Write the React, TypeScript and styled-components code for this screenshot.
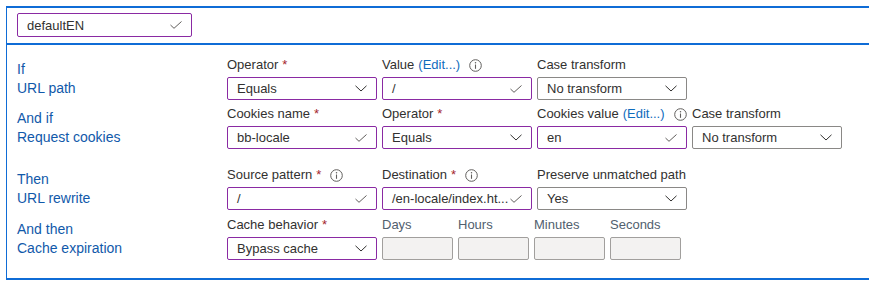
import React from "react";
import styled, { createGlobalStyle, css } from "styled-components";

const GlobalStyle = createGlobalStyle`
  html, body { margin: 0; padding: 0; background: #ffffff; }
  body {
    font-family: "Segoe UI", "Liberation Sans", Arial, sans-serif;
    font-size: 13px;
    color: #323130;
  }
`;

const Card = styled.div`
  margin: 6px 0 0 6px;
  border-left: 1px solid #0f6cd6;
  border-top: 2px solid #0f6cd6;
  border-bottom: 2px solid #0f6cd6;
  box-sizing: border-box;
`;

const Header = styled.div`
  padding: 5px 10px 6px;
  border-bottom: 2px solid #0f6cd6;
`;

const Body = styled.div`
  padding: 10px 10px 18px;
  display: flex;
  flex-direction: column;
`;

const RuleRow = styled.div<{ $gap: number }>`
  display: grid;
  grid-template-columns: 205px repeat(4, 150px);
  column-gap: 5px;
  align-items: center;
  margin-top: ${(p) => p.$gap}px;
`;

const SectionLabel = styled.div`
  color: #1159aa;
  font-size: 14px;
  line-height: 19px;
  display: flex;
  flex-direction: column;
  padding-top: 2px;
`;

const Field = styled.div<{ $span?: number }>`
  display: flex;
  flex-direction: column;
  ${(p) => p.$span && css`grid-column: span ${p.$span};`}
`;

const FieldLabel = styled.div<{ $muted?: boolean }>`
  height: 20px;
  line-height: 20px;
  display: flex;
  align-items: center;
  white-space: nowrap;
  margin-bottom: 2px;
  color: ${(p) => (p.$muted ? "#51606e" : "#323130")};
`;

const Required = styled.span`
  color: #a4262c;
  margin-left: 4px;
`;

const EditLink = styled.span`
  color: #0f6cbd;
  margin-left: 4px;
`;

const InfoWrap = styled.span`
  display: inline-flex;
  margin-left: 9px;
`;

type BoxVariant = "purple" | "gray" | "disabled";

const Box = styled.div<{ $variant: BoxVariant; $width?: number; $tall?: boolean }>`
  box-sizing: border-box;
  height: ${(p) => (p.$tall ? 24 : 23)}px;
  width: ${(p) => (p.$width ? `${p.$width}px` : "100%")};
  border: 1px solid
    ${(p) =>
      p.$variant === "purple" ? "#8a2aa3" : p.$variant === "gray" ? "#8a8886" : "#a19f9d"};
  border-radius: 2px;
  background: ${(p) => (p.$variant === "disabled" ? "#f3f2f1" : "#ffffff")};
  display: flex;
  align-items: center;
  padding: 0 9px 0 9px;
  gap: 4px;
`;

const BoxText = styled.span`
  flex: 1;
  min-width: 0;
  white-space: nowrap;
  color: #323130;
`;

const IconSlot = styled.span`
  display: inline-flex;
  flex-shrink: 0;
`;

const DurationGroup = styled.div`
  display: flex;
  gap: 5px;
`;

const DurationField = styled.div`
  display: flex;
  flex-direction: column;
  width: 71px;
`;

const Chevron = () => (
  <IconSlot>
    <svg width="12" height="7" viewBox="0 0 12 7">
      <polyline points="0.5,0.8 6,6 11.5,0.8" fill="none" stroke="#323130" strokeWidth="1" />
    </svg>
  </IconSlot>
);

const Check = () => (
  <IconSlot>
    <svg width="12" height="8" viewBox="0 0 12 8">
      <polyline points="0.5,4 4,7.3 11.5,0.5" fill="none" stroke="#605e5c" strokeWidth="1" />
    </svg>
  </IconSlot>
);

const Info = () => (
  <InfoWrap>
    <svg width="13" height="13" viewBox="0 0 13 13">
      <circle cx="6.5" cy="6.5" r="5.8" fill="none" stroke="#605e5c" strokeWidth="1" />
      <line x1="6.5" y1="5.5" x2="6.5" y2="9.8" stroke="#605e5c" strokeWidth="1.1" />
      <circle cx="6.5" cy="3.7" r="0.75" fill="#605e5c" />
    </svg>
  </InfoWrap>
);

type FieldDef = {
  label: string;
  required?: boolean;
  edit?: boolean;
  info?: boolean;
  value: string;
  variant: BoxVariant;
  icon: "chevron" | "check";
};

type RuleDef = {
  kind: string;
  name: string;
  gap: number;
  fields: FieldDef[];
  duration?: string[];
};

const rules: RuleDef[] = [
  {
    kind: "If",
    name: "URL path",
    gap: 0,
    fields: [
      { label: "Operator", required: true, value: "Equals", variant: "purple", icon: "chevron" },
      { label: "Value", edit: true, info: true, value: "/", variant: "purple", icon: "check" },
      { label: "Case transform", value: "No transform", variant: "gray", icon: "chevron" },
    ],
  },
  {
    kind: "And if",
    name: "Request cookies",
    gap: 4,
    fields: [
      { label: "Cookies name", required: true, value: "bb-locale", variant: "purple", icon: "check" },
      { label: "Operator", required: true, value: "Equals", variant: "purple", icon: "chevron" },
      { label: "Cookies value", edit: true, info: true, value: "en", variant: "purple", icon: "check" },
      { label: "Case transform", value: "No transform", variant: "gray", icon: "chevron" },
    ],
  },
  {
    kind: "Then",
    name: "URL rewrite",
    gap: 16,
    fields: [
      { label: "Source pattern", required: true, info: true, value: "/", variant: "purple", icon: "check" },
      { label: "Destination", required: true, info: true, value: "/en-locale/index.ht...", variant: "purple", icon: "check" },
      { label: "Preserve unmatched path", value: "Yes", variant: "gray", icon: "chevron" },
    ],
  },
  {
    kind: "And then",
    name: "Cache expiration",
    gap: 5,
    fields: [
      { label: "Cache behavior", required: true, value: "Bypass cache", variant: "purple", icon: "chevron" },
    ],
    duration: ["Days", "Hours", "Minutes", "Seconds"],
  },
];

export default function App() {
  return (
    <>
      <GlobalStyle />
      <Card>
        <Header>
          <Box $variant="purple" $width={175} $tall>
            <BoxText>defaultEN</BoxText>
            <Check />
          </Box>
        </Header>
        <Body>
          {rules.map((r) => (
            <RuleRow key={r.name} $gap={r.gap}>
              <SectionLabel>
                <span>{r.kind}</span>
                <span>{r.name}</span>
              </SectionLabel>
              {r.fields.map((f, i) => (
                <Field key={i}>
                  <FieldLabel>
                    {f.label}
                    {f.edit && <EditLink>(Edit...)</EditLink>}
                    {f.required && <Required>*</Required>}
                    {f.info && <Info />}
                  </FieldLabel>
                  <Box $variant={f.variant}>
                    <BoxText>{f.value}</BoxText>
                    {f.icon === "chevron" ? <Chevron /> : <Check />}
                  </Box>
                </Field>
              ))}
              {r.duration && (
                <Field $span={2}>
                  <DurationGroup>
                    {r.duration.map((d) => (
                      <DurationField key={d}>
                        <FieldLabel $muted>{d}</FieldLabel>
                        <Box $variant="disabled" />
                      </DurationField>
                    ))}
                  </DurationGroup>
                </Field>
              )}
            </RuleRow>
          ))}
        </Body>
      </Card>
    </>
  );
}
